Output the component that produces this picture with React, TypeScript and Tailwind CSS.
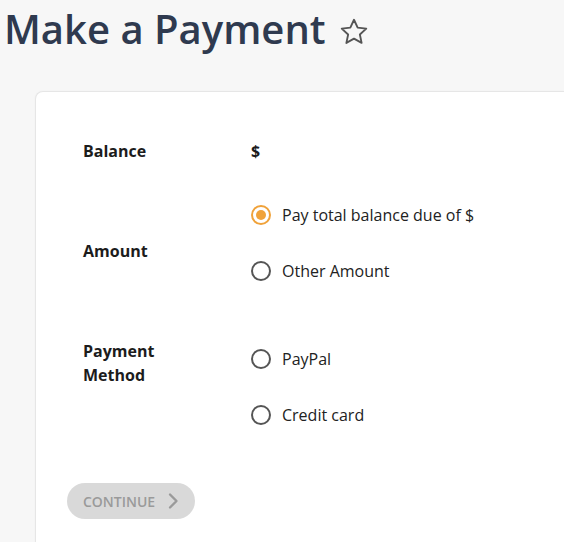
import { useState } from "react";

function Radio({ checked, label, onSelect }: { checked: boolean; label: string; onSelect: () => void }) {
  return (
    <label className="flex h-6 cursor-pointer items-center gap-[11px]" onClick={onSelect}>
      <span
        className={
          checked
            ? "flex size-5 items-center justify-center rounded-full border-2 border-[#f0a23a]"
            : "flex size-5 items-center justify-center rounded-full border-2 border-[#555]"
        }
      >
        {checked ? <span className="size-[10px] rounded-full bg-[#f0a23a]" /> : null}
      </span>
      <span className="text-base text-[#222]">{label}</span>
    </label>
  );
}

export default function App() {
  const [amount, setAmount] = useState("total");
  const [method, setMethod] = useState("");

  return (
    <div className="min-h-[542px] overflow-hidden bg-[#f7f7f7] font-['Open_Sans',sans-serif]">
      <div className="flex items-center gap-3 pl-[4px] pt-[4px]">
        <h1 className="text-[40px] font-semibold leading-[50px] text-[#2f3a4f]">Make a Payment</h1>
        <svg width="32" height="32" viewBox="0 0 24 24" fill="none" stroke="#555" strokeWidth="1.4" strokeLinejoin="round" className="mt-[6px]">
          <path d="M12 2.8l2.75 5.9 6.45.75-4.8 4.4 1.3 6.35L12 17l-5.7 3.2 1.3-6.35-4.8-4.4 6.45-.75z" />
        </svg>
      </div>

      <div className="ml-[35px] mt-[37px] rounded-tl-lg border-l border-t border-[#e6e6e6] bg-white pb-10 pl-[47px] pt-[47px] shadow-[0_0_2px_rgba(0,0,0,0.04)]">
        <div className="flex h-6 items-center">
          <div className="w-[168px] text-base font-bold text-[#1c1c1c]">Balance</div>
          <div className="text-base font-bold text-[#1c1c1c]">$</div>
        </div>

        <div className="mt-10 flex">
          <div className="w-[168px] pt-9 text-base font-bold leading-6 text-[#1c1c1c]">Amount</div>
          <div className="flex flex-col gap-8">
            <Radio checked={amount === "total"} label="Pay total balance due of $" onSelect={() => setAmount("total")} />
            <Radio checked={amount === "other"} label="Other Amount" onSelect={() => setAmount("other")} />
          </div>
        </div>

        <div className="mt-14 flex">
          <div className="w-[168px] text-base font-bold leading-6 text-[#1c1c1c]">
            Payment
            <br />
            Method
          </div>
          <div className="flex flex-col gap-8 pt-2">
            <Radio checked={method === "paypal"} label="PayPal" onSelect={() => setMethod("paypal")} />
            <Radio checked={method === "card"} label="Credit card" onSelect={() => setMethod("card")} />
          </div>
        </div>

        <button
          disabled
          className="-ml-4 mt-14 flex h-9 w-[128px] items-center justify-center gap-3 rounded-full bg-[#d9d9d9] text-[14px] font-semibold text-[#9a9a9a]"
        >
          CONTINUE
          <svg width="12" height="18" viewBox="0 0 12 18" fill="none" stroke="#9a9a9a" strokeWidth="2.4" strokeLinecap="round" strokeLinejoin="round">
            <path d="M3 2.5l6.5 6.5-6.5 6.5" />
          </svg>
        </button>
      </div>
    </div>
  );
}
